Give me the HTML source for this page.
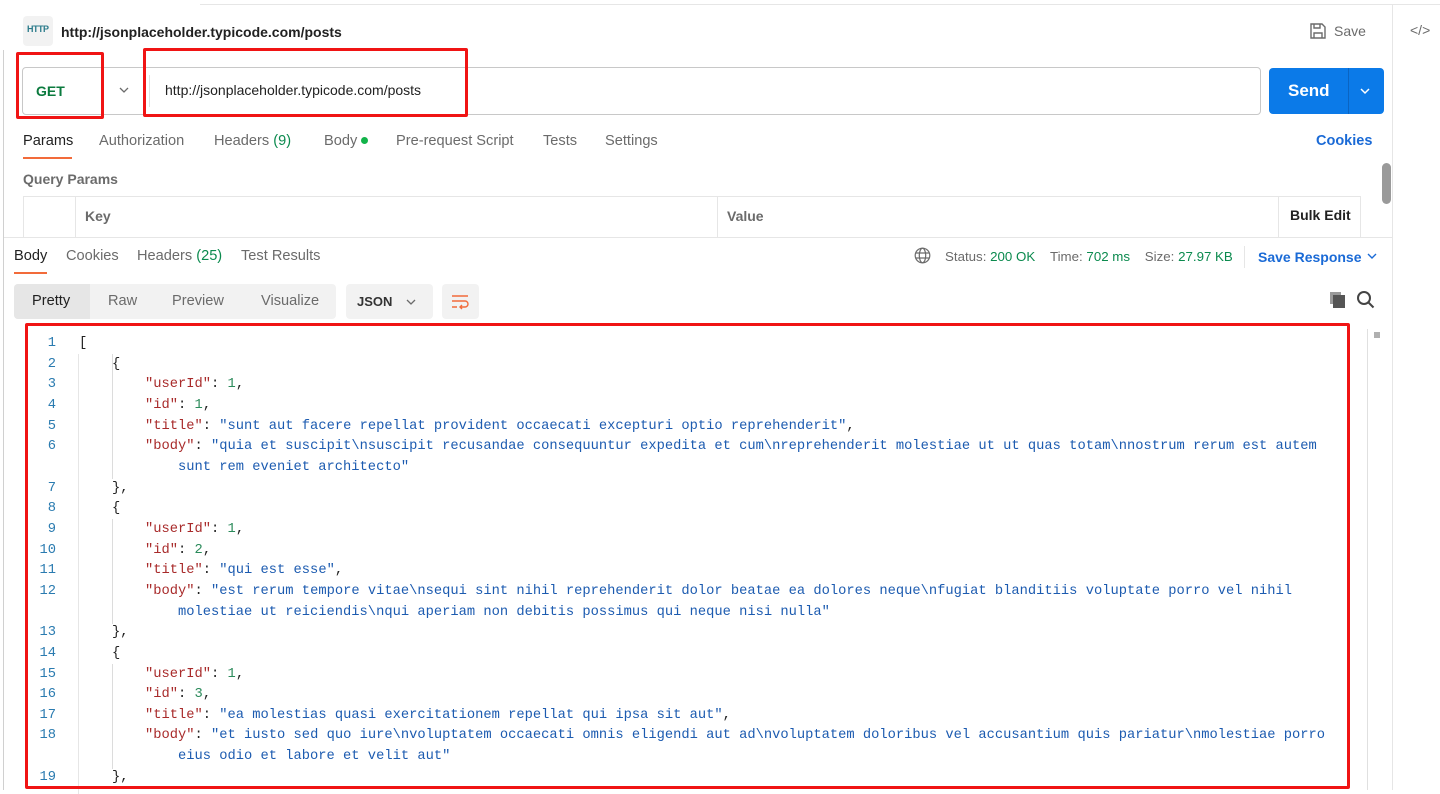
<!DOCTYPE html>
<html><head><meta charset="utf-8"><style>
*{box-sizing:border-box;margin:0;padding:0}
body{width:1440px;height:790px;position:relative;background:#fff;font-family:"Liberation Sans",Arial,sans-serif;overflow:hidden;color:#212121}
.a{position:absolute;white-space:nowrap}
.red{position:absolute;border:3px solid #f01414;border-radius:2px}
.tab{font-size:14.6px;color:#6b6b6b}
.code{position:absolute;left:0;top:334px;font-family:"Liberation Mono",monospace;font-size:13.75px;line-height:20.67px;width:1340px}
.row{height:20.67px;position:relative;white-space:pre}
.ln{position:absolute;left:26px;width:30px;text-align:right;color:#2a7bb0}
.tx{position:absolute;left:79px;color:#212121}
.k{color:#a82a2a}.s{color:#1c5bb0}.n{color:#2a8a5a}
</style></head><body>
<div class="a" style="left:3px;top:50px;width:1px;height:740px;background:#d0d0d0"></div>
<div class="a" style="left:200px;top:4px;width:1240px;height:1px;background:#e6e6e6"></div>
<div class="a" style="left:1392px;top:4px;width:1px;height:786px;background:#e6e6e6"></div>

<div class="a" style="left:23px;top:16px;width:30px;height:30px;border-radius:4px;background:#f2f2f2"></div>
<div class="a" style="left:27px;top:24px;font-size:9px;font-weight:bold;color:#2a7a8a;letter-spacing:-0.5px">HTTP</div>
<div class="a" style="left:61px;top:24px;font-size:14px;font-weight:bold;color:#212121">http://jsonplaceholder.typicode.com/posts</div>
<svg class="a" style="left:1309px;top:22px" width="18" height="18" viewBox="0 0 18 18" fill="none" stroke="#6b6b6b" stroke-width="1.4"><path d="M2 2h11l3 3v11H2z M5 2v4h6V2 M5 16v-5h8v5"/></svg>
<div class="a" style="left:1334px;top:23px;font-size:14px;color:#6b6b6b">Save</div>
<div class="a" style="left:1410px;top:22px;font-size:14px;color:#6b6b6b">&lt;/&gt;</div>

<div class="a" style="left:22px;top:67px;width:1239px;height:48px;border:1px solid #c8c8c8;border-radius:4px"></div>
<div class="a" style="left:149px;top:75px;width:1px;height:32px;background:#e0e0e0"></div>
<div class="a" style="left:36px;top:83px;font-size:14px;font-weight:bold;color:#0b7a3e">GET</div>
<svg class="a" style="left:118px;top:86px" width="12" height="8" viewBox="0 0 12 8" fill="none" stroke="#6b6b6b" stroke-width="1.3"><path d="M2 2l4 4 4-4"/></svg>
<div class="a" style="left:165px;top:82px;font-size:14px;color:#212121">http://jsonplaceholder.typicode.com/posts</div>
<div class="a" style="left:1269px;top:68px;width:115px;height:46px;background:#0b7ae8;border-radius:4px"></div>
<div class="a" style="left:1348px;top:68px;width:1px;height:46px;background:#0a64c2"></div>
<div class="a" style="left:1288px;top:81px;font-size:17px;font-weight:bold;color:#fff">Send</div>
<svg class="a" style="left:1359px;top:87px" width="12" height="8" viewBox="0 0 12 8" fill="none" stroke="#fff" stroke-width="1.5"><path d="M2 2l4 4 4-4"/></svg>

<div class="red" style="left:16px;top:52px;width:88px;height:67px"></div>
<div class="red" style="left:143px;top:48px;width:325px;height:69px"></div>

<div class="a tab" style="left:23px;top:133px;color:#212121">Params</div>
<div class="a" style="left:23px;top:157px;width:49px;height:2px;background:#f26b3a"></div>
<div class="a tab" style="left:99px;top:133px">Authorization</div>
<div class="a tab" style="left:214px;top:133px">Headers <span style="color:#0b8a4e">(9)</span></div>
<div class="a tab" style="left:324px;top:133px">Body <span style="display:inline-block;width:7px;height:7px;border-radius:50%;background:#12b34a;vertical-align:1px"></span></div>
<div class="a tab" style="left:396px;top:133px">Pre-request Script</div>
<div class="a tab" style="left:543px;top:133px">Tests</div>
<div class="a tab" style="left:605px;top:133px">Settings</div>
<div class="a" style="left:1316px;top:133px;font-size:14.5px;font-weight:bold;color:#1a6ad6">Cookies</div>
<div class="a" style="left:1382px;top:163px;width:9px;height:41px;background:#9a9a9a;border-radius:5px"></div>

<div class="a" style="left:23px;top:171px;font-size:14px;font-weight:bold;color:#6b6b6b">Query Params</div>
<div class="a" style="left:23px;top:196px;width:1338px;height:42px;border:1px solid #e6e6e6;border-bottom:none"></div>
<div class="a" style="left:75px;top:197px;width:1px;height:40px;background:#e6e6e6"></div>
<div class="a" style="left:717px;top:197px;width:1px;height:40px;background:#e6e6e6"></div>
<div class="a" style="left:1278px;top:197px;width:1px;height:40px;background:#e6e6e6"></div>
<div class="a" style="left:85px;top:208px;font-size:14px;font-weight:bold;color:#6b6b6b">Key</div>
<div class="a" style="left:727px;top:208px;font-size:14px;font-weight:bold;color:#6b6b6b">Value</div>
<div class="a" style="left:1290px;top:207px;font-size:14px;font-weight:bold;color:#212121">Bulk Edit</div>
<div class="a" style="left:4px;top:237px;width:1388px;height:1px;background:#e6e6e6"></div>

<div class="a tab" style="left:14px;top:248px;color:#212121">Body</div>
<div class="a" style="left:14px;top:272px;width:33px;height:2px;background:#f26b3a"></div>
<div class="a tab" style="left:66px;top:248px">Cookies</div>
<div class="a tab" style="left:137px;top:248px">Headers <span style="color:#0b8a4e">(25)</span></div>
<div class="a tab" style="left:241px;top:248px">Test Results</div>
<svg class="a" style="left:914px;top:247px" width="17" height="17" viewBox="0 0 17 17" fill="none" stroke="#6b6b6b" stroke-width="1.2"><circle cx="8.5" cy="8.5" r="7.3"/><ellipse cx="8.5" cy="8.5" rx="3.2" ry="7.3"/><path d="M1.5 6h14M1.5 11h14"/></svg>
<div class="a" style="left:945px;top:249px;font-size:13.3px;color:#6b6b6b">Status: <span style="color:#0b8a4e">200 OK</span>&nbsp;&nbsp;&nbsp;&nbsp;Time: <span style="color:#0b8a4e">702 ms</span>&nbsp;&nbsp;&nbsp;&nbsp;Size: <span style="color:#0b8a4e">27.97 KB</span></div>
<div class="a" style="left:1244px;top:246px;width:1px;height:22px;background:#e6e6e6"></div>
<div class="a" style="left:1258px;top:249px;font-size:14px;font-weight:bold;color:#1a6ad6">Save Response</div>
<svg class="a" style="left:1366px;top:252px" width="12" height="8" viewBox="0 0 12 8" fill="none" stroke="#1a6ad6" stroke-width="1.4"><path d="M2 2l4 4 4-4"/></svg>

<div class="a" style="left:14px;top:284px;width:322px;height:35px;background:#f2f2f2;border-radius:4px"></div>
<div class="a" style="left:14px;top:284px;width:76px;height:35px;background:#e6e6e6;border-radius:4px 0 0 4px"></div>
<div class="a tab" style="left:32px;top:293px;color:#212121">Pretty</div>
<div class="a tab" style="left:108px;top:293px">Raw</div>
<div class="a tab" style="left:172px;top:293px">Preview</div>
<div class="a tab" style="left:261px;top:293px">Visualize</div>
<div class="a" style="left:346px;top:284px;width:87px;height:35px;background:#f2f2f2;border-radius:4px"></div>
<div class="a" style="left:357px;top:294px;font-size:13px;font-weight:bold;color:#333">JSON</div>
<svg class="a" style="left:405px;top:298px" width="12" height="8" viewBox="0 0 12 8" fill="none" stroke="#6b6b6b" stroke-width="1.3"><path d="M2 2l4 4 4-4"/></svg>
<div class="a" style="left:442px;top:284px;width:37px;height:35px;background:#f2f2f2;border-radius:4px"></div>
<svg class="a" style="left:450px;top:293px" width="20" height="18" viewBox="0 0 20 18" fill="none" stroke="#f26b3a" stroke-width="1.4"><path d="M2 3h16M2 8h13a3 3 0 010 6h-5M12 12l-2 2 2 2M2 14h5"/></svg>
<svg class="a" style="left:1329px;top:291px" width="18" height="18" viewBox="0 0 18 18"><rect x="1" y="1" width="11" height="12" fill="#9a9a9a"/><rect x="4" y="4" width="12" height="13" fill="#555"/></svg>
<svg class="a" style="left:1356px;top:290px" width="19" height="19" viewBox="0 0 19 19" fill="none" stroke="#444" stroke-width="2"><circle cx="8" cy="8" r="6"/><path d="M12.5 12.5l5 5"/></svg>

<div class="a" style="left:1367px;top:329px;width:1px;height:461px;background:#e0e0e0"></div>
<div class="a" style="left:1374px;top:332px;width:6px;height:6px;background:#b0b0b0"></div>

<div class="a" style="left:112px;top:354px;width:1px;height:125px;background:#dcdcdc"></div>
<div class="a" style="left:112px;top:519px;width:1px;height:105px;background:#dcdcdc"></div>
<div class="a" style="left:112px;top:664px;width:1px;height:105px;background:#dcdcdc"></div>
<div class="a" style="left:78px;top:354px;width:1px;height:440px;background:#e6e6e6"></div>

<div class="code">
<div class="row"><span class="ln">1</span><span class="tx">[</span></div>
<div class="row"><span class="ln">2</span><span class="tx">    {</span></div>
<div class="row"><span class="ln">3</span><span class="tx">        <span class="k">"userId"</span>: <span class="n">1</span>,</span></div>
<div class="row"><span class="ln">4</span><span class="tx">        <span class="k">"id"</span>: <span class="n">1</span>,</span></div>
<div class="row"><span class="ln">5</span><span class="tx">        <span class="k">"title"</span>: <span class="s">"sunt aut facere repellat provident occaecati excepturi optio reprehenderit"</span>,</span></div>
<div class="row"><span class="ln">6</span><span class="tx">        <span class="k">"body"</span>: <span class="s">"quia et suscipit\nsuscipit recusandae consequuntur expedita et cum\nreprehenderit molestiae ut ut quas totam\nnostrum rerum est autem</span></span></div>
<div class="row"><span class="tx">            <span class="s">sunt rem eveniet architecto"</span></span></div>
<div class="row"><span class="ln">7</span><span class="tx">    },</span></div>
<div class="row"><span class="ln">8</span><span class="tx">    {</span></div>
<div class="row"><span class="ln">9</span><span class="tx">        <span class="k">"userId"</span>: <span class="n">1</span>,</span></div>
<div class="row"><span class="ln">10</span><span class="tx">        <span class="k">"id"</span>: <span class="n">2</span>,</span></div>
<div class="row"><span class="ln">11</span><span class="tx">        <span class="k">"title"</span>: <span class="s">"qui est esse"</span>,</span></div>
<div class="row"><span class="ln">12</span><span class="tx">        <span class="k">"body"</span>: <span class="s">"est rerum tempore vitae\nsequi sint nihil reprehenderit dolor beatae ea dolores neque\nfugiat blanditiis voluptate porro vel nihil</span></span></div>
<div class="row"><span class="tx">            <span class="s">molestiae ut reiciendis\nqui aperiam non debitis possimus qui neque nisi nulla"</span></span></div>
<div class="row"><span class="ln">13</span><span class="tx">    },</span></div>
<div class="row"><span class="ln">14</span><span class="tx">    {</span></div>
<div class="row"><span class="ln">15</span><span class="tx">        <span class="k">"userId"</span>: <span class="n">1</span>,</span></div>
<div class="row"><span class="ln">16</span><span class="tx">        <span class="k">"id"</span>: <span class="n">3</span>,</span></div>
<div class="row"><span class="ln">17</span><span class="tx">        <span class="k">"title"</span>: <span class="s">"ea molestias quasi exercitationem repellat qui ipsa sit aut"</span>,</span></div>
<div class="row"><span class="ln">18</span><span class="tx">        <span class="k">"body"</span>: <span class="s">"et iusto sed quo iure\nvoluptatem occaecati omnis eligendi aut ad\nvoluptatem doloribus vel accusantium quis pariatur\nmolestiae porro</span></span></div>
<div class="row"><span class="tx">            <span class="s">eius odio et labore et velit aut"</span></span></div>
<div class="row"><span class="ln">19</span><span class="tx">    },</span></div>
</div>

<div class="red" style="left:25px;top:323px;width:1325px;height:466px"></div>
</body></html>
